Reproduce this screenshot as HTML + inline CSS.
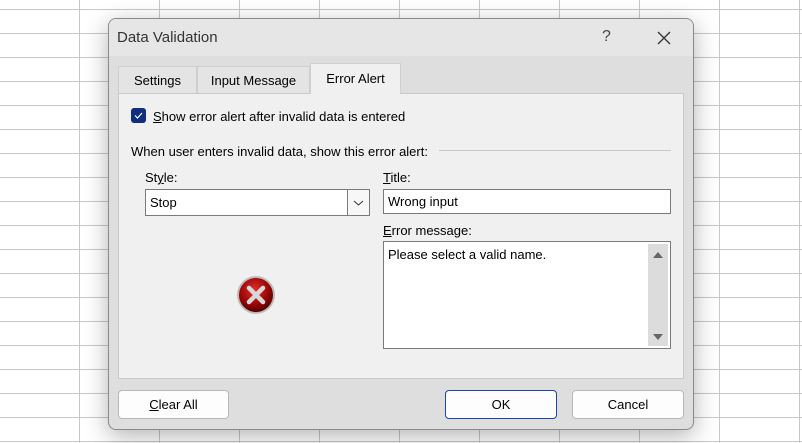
<!DOCTYPE html>
<html><head><style>
body{margin:0;width:802px;height:443px;overflow:hidden;position:relative;font-family:"Liberation Sans",sans-serif;font-size:13px;color:#000;
background-color:#fff;
background-image:linear-gradient(#c8c8c8 1px,transparent 1px),linear-gradient(90deg,#c8c8c8 1px,transparent 1px);
background-size:80px 24px;background-position:79px 9px;}
.dlg{position:absolute;left:108px;top:18px;width:586px;height:412px;background:#dedede;border:1px solid #8a8a8a;border-radius:8px;box-shadow:0 6px 24px rgba(0,0,0,.3);box-sizing:border-box;overflow:hidden}
.tb{position:absolute;left:0;top:0;right:0;height:37px;background:#e6e6e6}
.a{position:absolute;white-space:nowrap}
.tab{position:absolute;top:47px;height:28px;background:#e4e4e4;border:1px solid #cfcfcf;box-sizing:border-box;text-align:center;line-height:28px}
.panel{position:absolute;left:9px;top:74px;width:566px;height:286px;background:#f0f0f0;border:1px solid #c9c9c9;box-sizing:border-box}
.box{position:absolute;background:#fff;border:1px solid #7a7a7a;box-sizing:border-box}
.btn{position:absolute;top:371px;height:29px;background:#fdfdfd;border:1px solid #b8b8b8;border-radius:4px;box-sizing:border-box;text-align:center;line-height:27px}
u{text-decoration:underline}
</style></head><body>
<div class="dlg">
<div class="tb"></div>
<div class="a" style="left:8px;top:10px;font-size:15px;color:#333">Data Validation</div>
<div class="a" style="left:493px;top:9px;font-size:16px;color:#444">?</div>
<svg class="a" style="left:548px;top:12px" width="14" height="14"><path d="M1 1L13 13M13 1L1 13" stroke="#333" stroke-width="1.3"/></svg>
<div class="tab" style="left:9px;width:79px">Settings</div>
<div class="tab" style="left:88px;width:113px">Input Message</div>
<div class="panel"></div>
<div class="tab" style="left:201px;top:44px;width:91px;height:31px;background:#f0f0f0;border-bottom:none;line-height:30px">Error Alert</div>
<div class="a" style="left:22px;top:89px;width:15px;height:15px;background:#0f2f7e;border-radius:3px"><svg width="15" height="15"><path d="M4 7.5L6.5 10L11 5" stroke="#fff" stroke-width="1.2" fill="none"/></svg></div>
<div class="a" style="left:44px;top:90px"><u>S</u>how error alert after invalid data is entered</div>
<div class="a" style="left:22px;top:125px">When user enters invalid data, show this error alert:</div>
<div class="a" style="left:330px;top:131px;width:232px;height:1px;background:#c8c8c8"></div>
<div class="a" style="left:36px;top:151px">St<u>y</u>le:</div>
<div class="box" style="left:36px;top:170px;width:225px;height:27px"><span class="a" style="left:4px;top:5px">Stop</span>
<div class="a" style="right:0;top:0;width:21px;height:25px;border-left:1px solid #7a7a7a;background:#f7f7f7"><svg width="21" height="25"><path d="M6 11L10.5 15L15 11" stroke="#333" fill="none"/></svg></div></div>
<div class="a" style="left:274px;top:151px"><u>T</u>itle:</div>
<div class="box" style="left:274px;top:170px;width:288px;height:25px"><span class="a" style="left:4px;top:4px">Wrong input</span></div>
<div class="a" style="left:274px;top:204px"><u>E</u>rror message:</div>
<div class="box" style="left:274px;top:222px;width:288px;height:108px"><span class="a" style="left:4px;top:5px">Please select a valid name.</span>
<div class="a" style="right:2px;top:2px;width:20px;height:102px;background:#dcdcdc"><svg width="20" height="102"><path d="M5 14L10 8L15 14Z M5 90L10 96L15 90Z" fill="#666"/></svg></div></div>
<svg class="a" style="left:127px;top:256px" width="42" height="42"><defs><radialGradient id="g" cx="45%" cy="35%" r="65%"><stop offset="0" stop-color="#e03030"/><stop offset="0.6" stop-color="#a00808"/><stop offset="1" stop-color="#5a0000"/></radialGradient></defs>
<circle cx="20" cy="20" r="19" fill="#bbb"/><circle cx="20" cy="20" r="17" fill="url(#g)"/><path d="M13 13L27 27M27 13L13 27" stroke="#d8d8d8" stroke-width="4.5" stroke-linecap="round"/></svg>
<div class="btn" style="left:9px;width:111px"><u>C</u>lear All</div>
<div class="btn" style="left:336px;width:112px;border:1.5px solid #1747a8">OK</div>
<div class="btn" style="left:463px;width:112px">Cancel</div>
</div>
</body></html>
